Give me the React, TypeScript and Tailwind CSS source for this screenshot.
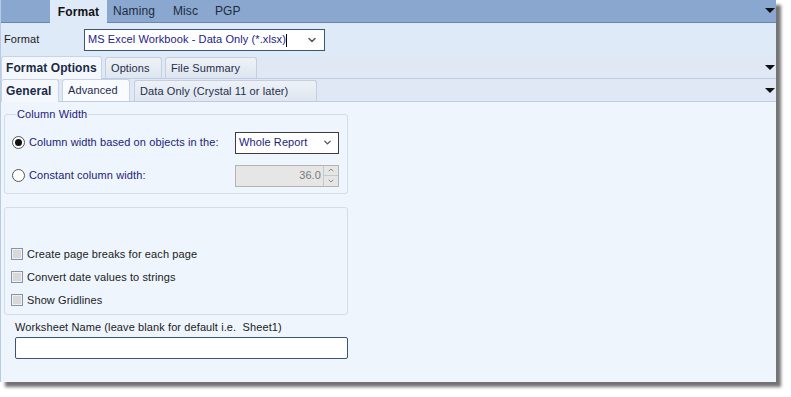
import { ChevronDown } from 'lucide-react'

function Caret() {
  return (
    <div className="w-0 h-0 border-l-[5px] border-r-[5px] border-t-[5px] border-l-transparent border-r-transparent border-t-[#111]" />
  )
}

function Tab({ label, active, w }: { label: string; active?: boolean; w: string }) {
  return (
    <div
      className={
        active
          ? `${w} h-[23px] -mb-px flex items-center pl-[4px] font-bold text-[12px] text-[#1a2a44] bg-[#f4f8fd] border border-b-0 border-[#c6d4e6] rounded-t-[3px]`
          : `${w} h-[21px] flex items-center pl-[5px] text-[#1f2d4a] bg-gradient-to-b from-[#eef2f7] to-[#dfe6ef] border border-b-0 border-[#c2cfdf] rounded-t-[3px]`
      }
    >
      {label}
    </div>
  )
}

function Checkbox({ label }: { label: string }) {
  return (
    <div className="flex items-center gap-[4px] h-[16px]">
      <div className="w-[12px] h-[12px] border border-[#8294b0] bg-[#d8d8d8] shadow-[inset_0_0_0_1px_#f0f0f0]" />
      <span className="text-[#1b1b1b]">{label}</span>
    </div>
  )
}

export default function App() {
  return (
    <div className="w-[791px] h-[397px] bg-white">
      <div className="w-[776px] h-[382px] bg-[#eef5fd] border-l border-[#b9cbe2] shadow-[5px_5px_3px_rgba(0,0,0,0.55)] flex flex-col font-['Liberation_Sans',sans-serif] text-[11px] tracking-[0.1px]">
        {/* top tab strip */}
        <div className="h-[23px] bg-[#8aa8cf] border-b border-[#6a86ad] flex items-end pl-[49px] pr-[6px] relative text-[12px]">
          <div className="w-[57px] h-[23px] -mb-px bg-[#dfeaf8] flex items-center justify-center font-bold text-[#111]">
            Format
          </div>
          <div className="self-stretch flex items-center">
            <span className="ml-[6px] text-[#1e2a40]">Naming</span>
            <span className="ml-[18px] text-[#1e2a40]">Misc</span>
            <span className="ml-[17px] text-[#1e2a40]">PGP</span>
          </div>
          <div className="absolute right-[1px] top-[8px]">
            <Caret />
          </div>
        </div>

        {/* format row */}
        <div className="h-[33px] bg-[#dfeaf8] flex items-center">
          <span className="w-[83px] pl-[3px] text-[#1b1b1b]">Format</span>
          <div className="w-[241px] h-[22px] bg-white border border-[#3b5478] flex items-center justify-between pl-[3px] pr-[6px]">
            <span className="text-[#22228a]">
              MS Excel Workbook - Data Only (*.xlsx)<span className="inline-block w-px h-[13px] bg-black align-middle" />
            </span>
            <ChevronDown className="w-[12px] h-[12px] text-[#555]" strokeWidth={3} />
          </div>
        </div>

        {/* format options tabs */}
        <div className="h-[23px] bg-[#dfe8f4] border-b border-[#bccde3] flex items-end relative">
          <Tab label="Format Options" active w="w-[101px]" />
          <div className="w-[3px]" />
          <Tab label="Options" w="w-[57px]" />
          <div className="w-[3px]" />
          <Tab label="File Summary" w="w-[92px]" />
          <div className="absolute right-[1px] top-[9px]">
            <Caret />
          </div>
        </div>

        {/* sub tabs */}
        <div className="h-[23px] bg-[#dfe8f4] border-b border-[#bccde3] flex items-end relative">
          <Tab label="General" active w="w-[58px]" />
          <div className="w-[3px]" />
          <div className="w-[68px] h-[22px] flex items-center pl-[5px] text-[#1f2d4a] bg-[#f8fbff] border border-b-0 border-[#c6d4e6] rounded-t-[3px]">
            Advanced
          </div>
          <div className="w-[4px]" />
          <Tab label="Data Only (Crystal 11 or later)" w="w-[183px]" />
          <div className="absolute right-[1px] top-[9px]">
            <Caret />
          </div>
        </div>

        {/* content */}
        <div className="flex-1 pl-[3px] pt-[4px]">
          <fieldset className="w-[344px] h-[88px] border border-[#d3dce8] rounded-[3px] pl-[7px] pr-[8px]">
            <legend className="ml-[4px] px-[1px] text-[#1c1c7a]">Column Width</legend>
            <div className="flex flex-col gap-[11px] mt-[9px]">
              <div className="flex items-center justify-between">
                <div className="flex items-center gap-[4px]">
                  <div className="w-[13px] h-[13px] rounded-full border border-[#555] bg-white flex items-center justify-center">
                    <div className="w-[7px] h-[7px] rounded-full bg-[#111]" />
                  </div>
                  <span className="text-[#1c1c7a]">Column width based on objects in the:</span>
                </div>
                <div className="w-[104px] h-[22px] bg-white border border-[#3c3c3c] flex items-center justify-between pl-[3px] pr-[5px]">
                  <span className="text-[#1c1c7a]">Whole Report</span>
                  <ChevronDown className="w-[11px] h-[11px] text-[#555]" strokeWidth={3} />
                </div>
              </div>
              <div className="flex items-center justify-between">
                <div className="flex items-center gap-[4px]">
                  <div className="w-[13px] h-[13px] rounded-full border border-[#555] bg-white" />
                  <span className="text-[#1c1c7a]">Constant column width:</span>
                </div>
                <div className="w-[104px] h-[22px] bg-[#e6e6e6] border border-[#b4b4b4] flex items-center justify-end">
                  <span className="text-[#7a7a7a] mr-[2px]">36.0</span>
                  <div className="w-[15px] h-full border-l border-[#c8c8c8] flex flex-col">
                    <div className="flex-1 flex items-center justify-center border-b border-[#c8c8c8]">
                      <ChevronDown className="w-[8px] h-[8px] text-[#888] rotate-180" strokeWidth={3} />
                    </div>
                    <div className="flex-1 flex items-center justify-center">
                      <ChevronDown className="w-[8px] h-[8px] text-[#888]" strokeWidth={3} />
                    </div>
                  </div>
                </div>
              </div>
            </div>
          </fieldset>

          <div className="mt-[13px] w-[344px] h-[108px] border border-[#d3dce8] rounded-[3px] pl-[6px] pt-[38px] flex flex-col gap-[7px]">
            <Checkbox label="Create page breaks for each page" />
            <Checkbox label="Convert date values to strings" />
            <Checkbox label="Show Gridlines" />
          </div>

          <div className="ml-[11px] mt-[4px] text-[#1b1b1b]">Worksheet Name (leave blank for default i.e.&nbsp; Sheet1)</div>
          <div className="ml-[11px] mt-[1px] w-[333px] h-[22px] bg-white border border-[#3b5478] rounded-[2px]" />
        </div>
      </div>
    </div>
  )
}
